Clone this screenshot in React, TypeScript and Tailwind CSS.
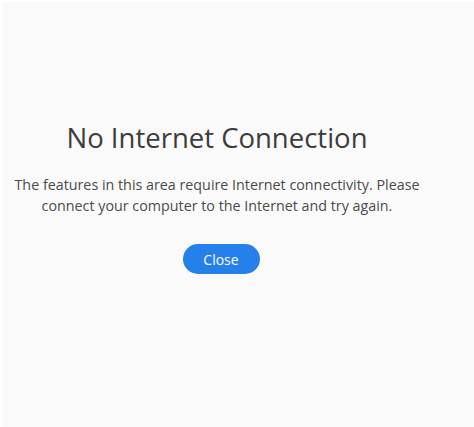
export default function App() {
  return (
    <div
      className="h-[427px] w-[474px] bg-[#fafafa] border-l-[3px] border-t-[2px] border-white"
      style={{ fontFamily: '"Open Sans", "Noto Sans", sans-serif' }}
    >
      <div className="w-[428px] flex flex-col items-center pt-[116px]">
        <h1 className="text-[27.5px] leading-[40px] text-[#3c3c3c] font-normal">
          No Internet Connection
        </h1>
        <p className="mt-[17px] text-[14.3px] leading-[20.5px] text-[#4b4b4b] text-center">
          The features in this area require Internet connectivity. Please
          <br />
          connect your computer to the Internet and try again.
        </p>
        <button className="mt-[28px] ml-[8px] h-[30px] w-[77px] rounded-full bg-[#2680eb] text-white text-[14px]">
          Close
        </button>
      </div>
    </div>
  );
}
